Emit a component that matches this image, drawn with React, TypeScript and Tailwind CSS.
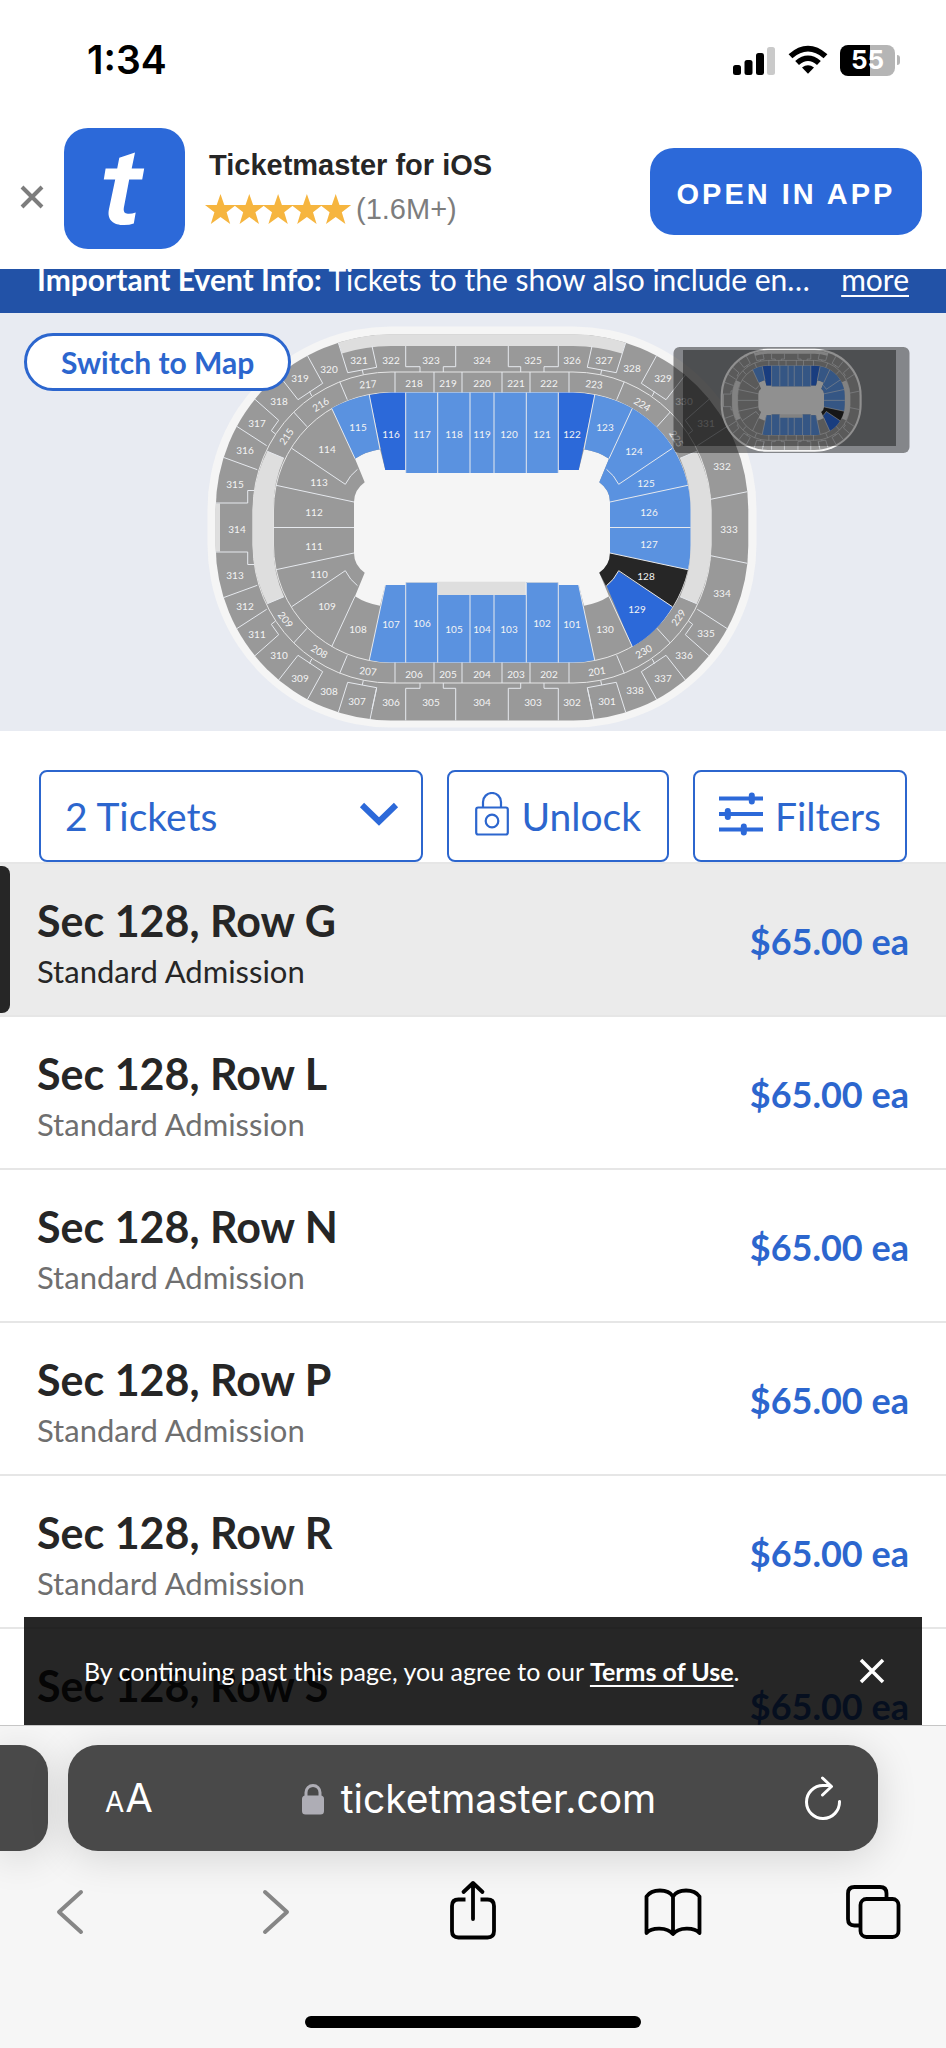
import React from "react";

type Label = [string, number, number, number?];

const LABELS: Label[] = [
  ["315", 235, 485], ["316", 245, 451], ["317", 257, 424], ["318", 279, 402], ["319", 300, 379],
  ["320", 329, 370], ["321", 359, 361], ["322", 391, 361], ["323", 431, 361], ["324", 482, 361],
  ["325", 533, 361], ["326", 572, 361], ["327", 604, 361], ["328", 632, 369], ["329", 663, 379],
  ["330", 684, 402], ["331", 706, 424], ["332", 722, 467], ["333", 729, 530], ["334", 722, 594],
  ["335", 706, 634], ["336", 684, 656], ["337", 663, 679], ["338", 635, 691], ["301", 607, 702],
  ["302", 572, 703], ["303", 533, 703], ["304", 482, 703], ["305", 431, 703], ["306", 391, 703],
  ["307", 357, 702], ["308", 329, 692], ["309", 300, 679], ["310", 279, 656], ["311", 257, 635],
  ["312", 245, 607], ["313", 235, 576], ["314", 237, 530],
  ["215", 287, 437, -55], ["216", 321, 405, -32], ["217", 368, 385, -4], ["218", 414, 384],
  ["219", 448, 384], ["220", 482, 384], ["221", 516, 384], ["222", 549, 384], ["223", 594, 385, 6],
  ["224", 642, 405, 32], ["225", 676, 439, 58], ["229", 679, 618, -55], ["230", 644, 652, -30],
  ["201", 597, 672, -8], ["202", 549, 675], ["203", 516, 675], ["204", 482, 675], ["205", 448, 675],
  ["206", 414, 675], ["207", 368, 672, 6], ["208", 319, 652, 30], ["209", 285, 620, 52],
  ["115", 358, 428], ["116", 391, 435], ["117", 422, 435], ["118", 454, 435], ["119", 482, 435],
  ["120", 509, 435], ["121", 542, 435], ["122", 572, 435], ["123", 605, 428], ["124", 634, 452],
  ["125", 646, 484], ["126", 649, 513], ["127", 649, 545], ["128", 646, 577], ["129", 637, 610],
  ["130", 605, 630], ["101", 572, 625], ["102", 542, 624], ["103", 509, 630], ["104", 482, 630],
  ["105", 454, 630], ["106", 422, 624], ["107", 391, 625], ["108", 358, 630], ["109", 327, 607],
  ["110", 319, 575], ["111", 314, 547], ["112", 314, 513], ["113", 319, 483], ["114", 327, 450],
];

// Section borders, drawn for the north-west corner and mirrored into the others.
const CORNER_LINES =
  "M291.7 448.3L345.3 484.3Q350 475 357.5 469.3M276 485.3L354 502M331.7 408.3L355 458.7" +
  "M267.3 451.3L284 458.3M293.7 412L307 426.7M339.7 381.7L347.3 399.7M395 372V392.5M434 372V392.5M462 372V392.5";
const NORTH_LINES = "M369.3 395L380 449.3M437.7 392.5V473M470 392.5V473M405.7 392.5V473";
const SOUTH_LINES = "M369.3 660L385.3 585M405.7 583V662.5M437.7 583V662.5M470 595V662.5";
const UPPER_LINES =
  "M278.7 375L298 399.7L322.7 383.3L307.3 355.3M309.5 391.5L311.8 396M338.3 342.7L347.7 372.7L376.7 367.3L372 346" +
  "M362.3 370L363.3 374.5M405.7 346V366.7H420V372M455.7 346V366.7H443.3V372";
const SIDE_LINES =
  "M236.7 426.3L266.7 445.7M255 399.3L278.7 420.3L271.3 430.7L275.5 434";
const WEST_LINES = "M215.7 503H247.7V490.5H254M223.3 457.3L257.3 469.7";

const EAST = "matrix(-1 0 0 1 964 0)";
const SOUTH = "matrix(1 0 0 -1 0 1055)";
const SOUTH_EAST = "matrix(-1 0 0 -1 964 1055)";

function Arena({ labels, line }: { labels?: boolean; line: number }) {
  return (
    <g>
      <rect x="207.5" y="326.5" width="549" height="401" rx="183" fill="#f5f5f5" />
      <rect x="215.7" y="334.6" width="532.6" height="385.8" rx="175" fill="#999" />
      <path
        d="M338.3 342.7A175 175 0 0 1 390.7 334.3H573.3A175 175 0 0 1 625.7 342.7L622 353.5A163.5 163.5 0 0 0 573.3 346H390.7A163.5 163.5 0 0 0 342 353.5Z"
        fill="#dedede"
      />
      <path d="M215.5 503.5H220V551.5H215.5Z" fill="#dedede" />
      <g fill="none" stroke="#e6e6e6" strokeWidth={line}>
        <rect x="253" y="372" width="458" height="311" rx="138" />
        <rect x="273.5" y="392.5" width="417" height="270" rx="117.5" />
      </g>
      {[undefined, EAST].map((t, i) => (
        <path
          key={i}
          transform={t}
          d="M267.3 451.3A138 138 0 0 0 252.6 510V545A138 138 0 0 0 267.3 603.7L284 596.7A117.5 117.5 0 0 1 273.5 545V510A117.5 117.5 0 0 1 284 458.3Z"
          fill="#dedede"
        />
      ))}
      <path
        d="M405.7 473V470H385.3L380 449.3Q366 451.5 355 458.7L364.7 482.3Q354 490 354 502V553Q354 565 364.7 572.7L355 596.3Q366 603.5 380 605.7L385.3 585H405.7V582.7H437.7V595H526V582.7H558.3V585H578.7L584 605.7Q598 603.5 609 596.3L599.3 572.7Q610 565 610 553V502Q610 490 599.3 482.3L609 458.7Q598 451.5 584 449.3L578.7 470H558.3V473Z"
        fill="#f5f5f5"
      />
      <rect x="437.7" y="581.7" width="88" height="13.3" fill="#dedede" />
      <g fill="#5a92e0">
        <path d="M331.7 408.3A117.5 117.5 0 0 1 369.3 395L380 449.3Q366 451.5 355 458.7Z" />
        <path transform={EAST} d="M331.7 408.3A117.5 117.5 0 0 1 369.3 395L380 449.3Q366 451.5 355 458.7Z" />
        <rect x="405.7" y="392.5" width="152.6" height="80.5" />
        <path d="M632.3 408.3A117.5 117.5 0 0 1 690.5 510V545Q690.5 558 688 569.7L610 553V502Q610 490 599.3 482.3L609 458.7Z" />
        <path d="M369.3 660L385.3 585H405.7V662.5H391Q380 662.5 369.3 660Z" />
        <path transform={EAST} d="M369.3 660L385.3 585H405.7V662.5H391Q380 662.5 369.3 660Z" />
        <path d="M405.7 582.7H437.7V595H526V582.7H558.3V662.5H405.7Z" />
      </g>
      <g fill="#2c69d9">
        <path d="M369.3 395Q380 392.5 391 392.5H405.7V470H385.3Z" />
        <path transform={EAST} d="M369.3 395Q380 392.5 391 392.5H405.7V470H385.3Z" />
        <path d="M672.7 606.7Q657 633 632.3 646.7L606.7 586Q614 580 618.3 571.3Z" />
      </g>
      <path d="M610 553L688 569.7Q683 590 672.7 606.7L618.3 571.3Q614 580 606 586L599.3 572.7Q610 565 610 553Z" fill="#262626" />
      <g fill="none" stroke="#e6e9ee" strokeWidth={line}>
        {[undefined, EAST].map((t, i) => (
          <g key={i} transform={t}>
            <path d={NORTH_LINES} />
            <path d={SOUTH_LINES} />
          </g>
        ))}
        {[undefined, EAST, SOUTH, SOUTH_EAST].map((t, i) => (
          <g key={i} transform={t}>
            <path d={CORNER_LINES} />
            <path d={UPPER_LINES} />
            <path d={SIDE_LINES} />
          </g>
        ))}
        <path d="M273.5 527.5H354M610 527.5H690.5" />
        <path d={WEST_LINES} />
        <path transform={SOUTH} d={WEST_LINES} />
        <path d="M710.7 499.3L747.3 491.7M710.7 555.7L747.3 563.3" />
        <path d="M370 719.5L376.7 687.7M594 719.5L587.3 687.7M405.7 709V720.4M455.7 709V720.4M508.3 709V720.4M558.3 709V720.4" />
      </g>
      {labels && (
        <g fill="#f4f4f4" fontSize="10" textAnchor="middle" fontFamily="Lato, sans-serif">
          {LABELS.map(([text, x, y, r]) => (
            <text key={text} x={x} y={y + 3} transform={r ? `rotate(${r} ${x} ${y})` : undefined}>
              {text}
            </text>
          ))}
        </g>
      )}
    </g>
  );
}

function SeatMap() {
  return (
    <section aria-label="Seat map" className="relative bg-[#e8ebf2]">
      <svg viewBox="0 313 946 418" className="block w-full">
        <Arena labels line={1} />
        <rect x="673.5" y="347" width="236" height="106" rx="6" fill="#000" fillOpacity="0.43" />
        <g transform="translate(667.4 264.9) scale(0.2568)">
          <Arena line={2.4} />
        </g>
        <rect x="683" y="350" width="213" height="96" fill="#000" fillOpacity="0.41" />
      </svg>
      <button
        type="button"
        className="absolute left-6 top-5 h-[58px] rounded-full border-3 border-[#2c66ce] bg-white px-[34px] text-[30px] leading-9 font-bold text-[#2c66ce]"
      >
        Switch to Map
      </button>
    </section>
  );
}

function StatusBar() {
  return (
    <header className="flex h-[120px] items-center justify-between bg-white pr-[46px] pl-[87px]">
      <span className="font-[Inter] text-[39px] leading-[44px] font-semibold text-black">1:34</span>
      <div className="flex items-center gap-3">
        <svg className="h-8 w-[43px]" viewBox="0 0 43 32">
          <rect x="0" y="21" width="8" height="10" rx="2.5" />
          <rect x="11.5" y="16" width="8" height="15" rx="2.5" />
          <rect x="23" y="9" width="8" height="22" rx="2.5" />
          <rect x="34" y="3" width="8" height="28" rx="2.5" fill="#cacaca" />
        </svg>
        <svg className="h-8 w-10" viewBox="0 0 40 32">
          <path d="M0.6 10.2Q20-6.6 39.4 10.2L35.6 14.2Q20 1 4.4 14.2Z" />
          <path d="M7.2 17Q20 6.2 32.8 17L29 21Q20 13 11 21Z" />
          <path d="M14 23.6Q20 19 26 23.6L20 29.8Z" />
        </svg>
        <div className="flex items-center gap-0.5">
          <div className="flex h-[31px] w-[55px] items-center justify-center rounded-lg bg-[linear-gradient(90deg,#000_54%,#b5b5b5_54%)] font-[Inter] text-[26px] leading-8 font-bold text-white">
            55
          </div>
          <div className="h-2.5 w-[3px] rounded-r-full bg-[#b5b5b5]" />
        </div>
      </div>
    </header>
  );
}

function AppBanner() {
  return (
    <div className="flex items-center gap-5 bg-white pt-2 pr-6 pb-5 pl-5 font-['Liberation_Sans',sans-serif]">
      <button type="button" aria-label="Close" className="mt-4 shrink-0">
        <svg className="size-6" viewBox="0 0 24 24" stroke="#7d7d7d" strokeWidth="4">
          <path d="M2 2L22 22M22 2L2 22" />
        </svg>
      </button>
      <div className="size-[121px] shrink-0 overflow-hidden rounded-3xl bg-[#2c69d9]">
        <svg className="size-full" viewBox="64 128.5 121 121" fill="#fff">
          <path d="M135 153L119.3 158.2L117.2 169H105.6L103.8 180H115.2L109 209.5C106.5 221 114 225.6 124 225.6Q129.5 225.6 133.8 224L135.7 213Q131.5 214.6 127.8 214.3Q122.8 214 123.8 208.5L129.2 180H142.2L144.2 169H131.7Z" />
        </svg>
      </div>
      <div className="flex-1 pb-1 pl-1">
        <h1 className="text-[29px] leading-8 font-bold text-[#262626]">Ticketmaster for iOS</h1>
        <div className="mt-3 flex items-center gap-1">
          <svg className="-ml-1 h-8 w-[147px]" viewBox="0 0 147 32" fill="#f6b53f">
            {[0, 1, 2, 3, 4].map((i) => (
              <path
                key={i}
                transform={`translate(${i * 28.8} 0)`}
                d="M15.5 1L19.3 12H31L21.6 19.2L25.2 31L15.5 24L5.8 31L9.4 19.2L0 12H11.7Z"
              />
            ))}
          </svg>
          <span className="text-[29px] leading-8 text-[#7d7d7d]">(1.6M+)</span>
        </div>
      </div>
      <button
        type="button"
        className="mt-1.5 h-[87px] w-[272px] shrink-0 rounded-3xl bg-[#2c69d9] pt-1 text-[29px] leading-8 font-bold tracking-[3px] text-white"
      >
        OPEN IN APP
      </button>
    </div>
  );
}

function FilterBar() {
  return (
    <div className="flex gap-6 bg-white px-[39px] pt-[39px] text-[39px] leading-[46px] text-[#2c66ce]">
      <div className="relative flex-1">
        <select
          aria-label="Number of tickets"
          defaultValue="2"
          className="h-[92px] w-full appearance-none rounded-lg border-2 border-[#2c66ce] bg-white pl-6"
        >
          <option value="1">1 Ticket</option>
          <option value="2">2 Tickets</option>
          <option value="3">3 Tickets</option>
          <option value="4">4 Tickets</option>
        </select>
        <svg
          className="pointer-events-none absolute top-8 right-6 h-6 w-10"
          viewBox="0 0 40 24"
          fill="none"
          stroke="#2c69d9"
          strokeWidth="6"
        >
          <path d="M3 3L20 19.5L37 3" />
        </svg>
      </div>
      <button type="button" className="flex h-[92px] items-center gap-3 rounded-lg border-2 border-[#2c66ce] px-[26px]">
        <svg className="-mt-1 h-11 w-[34px]" viewBox="0 0 34 44" fill="none" stroke="#2c66ce" strokeWidth="2.2">
          <rect x="1.2" y="15.5" width="31.6" height="27" rx="2" />
          <path d="M8 15.5V10A9 9 0 0 1 26 10V15.5" />
          <circle cx="17" cy="29" r="6.3" />
        </svg>
        Unlock
      </button>
      <button type="button" className="flex h-[92px] items-center gap-3 rounded-lg border-2 border-[#2c66ce] px-6">
        <svg className="-mt-1 h-11 w-11" viewBox="0 0 44 44" stroke="#2c69d9" strokeWidth="4">
          <path d="M0 6.5H44M0 22H44M0 37.5H44" />
          <path d="M32.8 3.5V9.5M8.8 19V25M24.8 34.5V40.5" strokeWidth="6" strokeLinecap="round" />
        </svg>
        Filters
      </button>
    </div>
  );
}

const ROWS = ["G", "L", "N", "P", "R", "S"];

function TicketList() {
  return (
    <ul className="border-t-2 border-[#e6e6e6]">
      {ROWS.map((row, i) => (
        <li
          key={row}
          className={
            "relative flex h-[153px] items-center justify-between border-b-2 border-[#e6e6e6] px-[37px] " +
            (i === 0 ? "bg-[#ebebeb]" : "bg-white")
          }
        >
          {i === 0 && <span className="absolute inset-y-0.5 left-0 w-2.5 rounded-r-lg bg-[#262626]" />}
          <div className="pt-1">
            <h2 className="text-[43px] leading-[52px] font-bold text-[#262626]">Sec 128, Row {row}</h2>
            <p className={"mt-1.5 text-[31px] leading-9 " + (i === 0 ? "text-[#262626]" : "text-[#6f6f6f]")}>
              Standard Admission
            </p>
          </div>
          <span className="pt-0.5 text-[36px] leading-10 font-bold text-[#2c66ce]">$65.00 ea</span>
        </li>
      ))}
    </ul>
  );
}

function TermsBar() {
  return (
    <div className="absolute inset-x-6 bottom-0 flex h-[108px] items-center justify-between bg-black/85 pr-9 pl-[60px] text-white">
      <p className="text-[25px] leading-8">
        By continuing past this page, you agree to our{" "}
        <a href="#terms" className="font-bold underline decoration-2 underline-offset-4">
          Terms of Use
        </a>
        .
      </p>
      <button type="button" aria-label="Dismiss">
        <svg className="size-7" viewBox="0 0 28 28" stroke="#fff" strokeWidth="3.5">
          <path d="M3 3L25 25M25 3L3 25" />
        </svg>
      </button>
    </div>
  );
}

function BrowserChrome() {
  return (
    <footer className="relative z-10 overflow-hidden border-t border-[#c6c6c6] bg-[#f6f6f6] pt-[19px] pb-5">
      <div className="flex gap-5 pr-[68px]">
        <div className="h-[106px] w-12 rounded-r-[28px] bg-[#494949] shadow-[0_6px_40px_rgba(0,0,0,0.14)]" />
        <div className="flex h-[106px] flex-1 items-center justify-between rounded-[30px] bg-[#494949] pr-9 pl-[37px] font-[Inter] text-white shadow-[0_6px_40px_rgba(0,0,0,0.14)]">
          <button type="button" aria-label="Page settings" className="flex items-baseline gap-px pt-1">
            <span className="text-[28px] leading-10">A</span>
            <span className="text-[40px] leading-10">A</span>
          </button>
          <div className="flex items-center gap-4 pt-0.5">
            <svg className="h-8 w-6" viewBox="0 0 24 32">
              <path d="M5 14V9.5A7 7 0 0 1 19 9.5V14" fill="none" stroke="#aeadb5" strokeWidth="3" />
              <rect x="1" y="12.5" width="22" height="19" rx="3.5" fill="#aeadb5" />
            </svg>
            <span className="text-[39px] leading-[48px]">ticketmaster.com</span>
          </div>
          <button type="button" aria-label="Reload">
            <svg
              className="h-11 w-[38px]"
              viewBox="0 0 38 44"
              fill="none"
              stroke="#fff"
              strokeWidth="3"
              strokeLinecap="round"
              strokeLinejoin="round"
            >
              <path d="M26 9.5H19A16.5 16.5 0 1 0 35.5 25.5M18.5 2L27.5 10.5L18.5 19" />
            </svg>
          </button>
        </div>
      </div>
      <nav className="mt-[33px] flex justify-between pr-[45px] pl-[42px]">
        <button type="button" aria-label="Back">
          <svg className="size-14" viewBox="0 0 56 56" fill="none" stroke="#868686" strokeWidth="4" strokeLinecap="round" strokeLinejoin="round">
            <path d="M39 8L17 28L39 48" />
          </svg>
        </button>
        <button type="button" aria-label="Forward">
          <svg className="size-14" viewBox="0 0 56 56" fill="none" stroke="#868686" strokeWidth="4" strokeLinecap="round" strokeLinejoin="round">
            <path d="M22 8L44 28L22 48" />
          </svg>
        </button>
        <button type="button" aria-label="Share">
          <svg className="size-14 overflow-visible" viewBox="0 0 56 56" fill="none" stroke="#000" strokeWidth="3.8" strokeLinecap="round" strokeLinejoin="round">
            <path d="M29 35V-1M19.500 8L29 -1L38.500 8" />
            <path d="M21.5 15.5H14.5Q8 15.5 8 22V47Q8 53.5 14.5 53.5H43.5Q50 53.5 50 47V22Q50 15.5 43.5 15.5H36.5" strokeLinecap="butt" />
          </svg>
        </button>
        <button type="button" aria-label="Bookmarks">
          <svg className="size-14 overflow-visible" viewBox="0 0 56 56" fill="none" stroke="#000" strokeWidth="3.8" strokeLinejoin="round">
            <path d="M29 12.5C24 4.5 8 4.5 2.5 12.5V49C8 43 23 43 29 50C35 43 50 43 55.5 49V12.5C50 4.5 34 4.5 29 12.5V50" />
          </svg>
        </button>
        <button type="button" aria-label="Tabs">
          <svg className="size-14" viewBox="0 0 56 56" fill="none" stroke="#000" strokeWidth="3.8">
            <rect x="15.5" y="15" width="38" height="38" rx="6" />
            <path d="M15 41.5H9.5Q3 41.5 3 35V9.5Q3 3 9.5 3H35Q41.5 3 41.5 9.5V15" />
          </svg>
        </button>
      </nav>
      <div className="mx-auto mt-[76px] h-3 w-[336px] rounded-full bg-black" />
    </footer>
  );
}

export default function App() {
  return (
    <div className="flex h-screen flex-col bg-white font-[Lato,sans-serif]">
      <StatusBar />
      <AppBanner />
      <main className="relative min-h-0 flex-1 overflow-hidden">
        <div className="flex h-11 items-end justify-between overflow-hidden bg-[#2252a7] px-[37px] pb-4 text-[30px] leading-9 whitespace-nowrap text-white">
          <p>
            <strong>Important Event Info:</strong> Tickets to the show also include en…
          </p>
          <a href="#info" className="underline decoration-2 underline-offset-4">
            more
          </a>
        </div>
        <SeatMap />
        <FilterBar />
        <TicketList />
        <TermsBar />
      </main>
      <BrowserChrome />
    </div>
  );
}
